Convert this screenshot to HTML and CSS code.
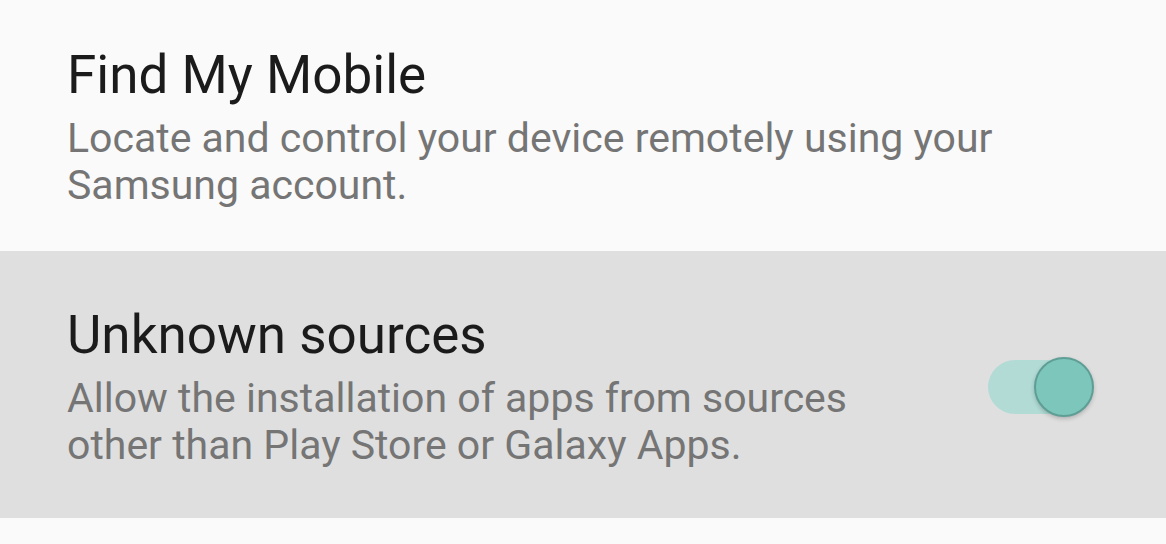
FILE: index.html
```html
<!DOCTYPE html>
<html lang="en">
<head>
  <meta charset="UTF-8" />
  <title>Security settings</title>
  <link rel="stylesheet" href="styles.css">
</head>
<body>
  <div class="lista">
    <div class="setting">
      <div class="setting-text">
        <div class="titulo">Find My Mobile</div>
        <div class="descricao">Locate and control your device remotely using your Samsung account.</div>
      </div>
    </div>

    <div class="setting pressed">
      <div class="setting-text">
        <div class="titulo">Unknown sources</div>
        <div class="descricao">Allow the installation of apps from sources other than Play Store or Galaxy Apps.</div>
      </div>
      <div class="switch on">
        <div class="switch-track"></div>
        <div class="switch-knob"></div>
      </div>
    </div>
  </div>
</body>
</html>
```

FILE: styles.css
```css
body {
  margin: 0;
  background: #fafafa;
  font-family: Roboto, "Noto Sans", sans-serif;
  overflow: hidden;
}

.lista {
  margin-top: -9px;
}

.setting {
  display: flex;
  align-items: center;
  gap: 70px;
  padding: 54px 72px 42px 67px;
}

.setting.pressed {
  background: #dfdfdf;
  padding-bottom: 49px;
}

.setting-text {
  flex: 1;
}

.titulo {
  font-size: 53px;
  line-height: 60px;
  color: #1b1b1b;
  margin-bottom: 10px;
}

.descricao {
  font-size: 41px;
  line-height: 47px;
  color: #757575;
}

.switch {
  position: relative;
  width: 106px;
  height: 60px;
  flex-shrink: 0;
}

.switch-track {
  position: absolute;
  left: 0;
  top: 3px;
  width: 97px;
  height: 54px;
  border-radius: 27px;
  background: #b2dbd5;
}

.switch-knob {
  position: absolute;
  right: 0;
  top: 0;
  width: 60px;
  height: 60px;
  box-sizing: border-box;
  border-radius: 50%;
  background: #7cc6bb;
  border: 2px solid #5f9e95;
  box-shadow: 0 2px 4px rgba(0, 0, 0, 0.2);
}
```
